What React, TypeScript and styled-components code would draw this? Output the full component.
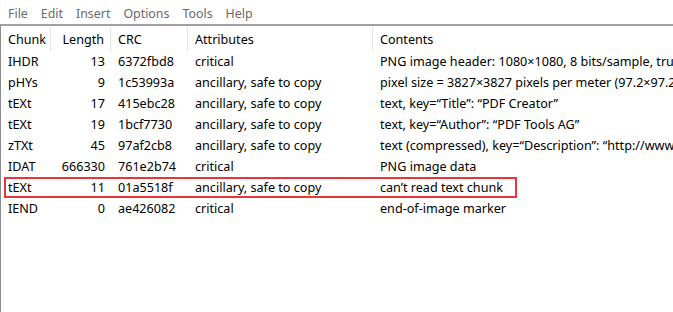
import React from "react";
import styled, { createGlobalStyle } from "styled-components";

const GlobalStyle = createGlobalStyle`
  html, body {
    margin: 0;
    padding: 0;
    background: #ffffff;
  }
  body {
    font-family: "Noto Sans", "Open Sans", sans-serif;
    font-size: 12.6px;
    color: #000000;
    overflow: hidden;
  }
`;

interface Chunk {
  name: string;
  length: number;
  crc: string;
  attributes: string;
  contents: string;
  /* marks the row with a red frame */
  marked?: boolean;
}

const chunks: Chunk[] = [
  { name: "IHDR", length: 13, crc: "6372fbd8", attributes: "critical", contents: "PNG image header: 1080×1080, 8 bits/sample, truecolor, noninterlaced" },
  { name: "pHYs", length: 9, crc: "1c53993a", attributes: "ancillary, safe to copy", contents: "pixel size = 3827×3827 pixels per meter (97.2×97.2 dpi)" },
  { name: "tEXt", length: 17, crc: "415ebc28", attributes: "ancillary, safe to copy", contents: "text, key=“Title”: “PDF Creator”" },
  { name: "tEXt", length: 19, crc: "1bcf7730", attributes: "ancillary, safe to copy", contents: "text, key=“Author”: “PDF Tools AG”" },
  { name: "zTXt", length: 45, crc: "97af2cb8", attributes: "ancillary, safe to copy", contents: "text (compressed), key=“Description”: “http://www.pdf-tools.com”" },
  { name: "IDAT", length: 666330, crc: "761e2b74", attributes: "critical", contents: "PNG image data" },
  { name: "tEXt", length: 11, crc: "01a5518f", attributes: "ancillary, safe to copy", contents: "can’t read text chunk", marked: true },
  { name: "IEND", length: 0, crc: "ae426082", attributes: "critical", contents: "end-of-image marker" }
];

const menuItems = ["File", "Edit", "Insert", "Options", "Tools", "Help"];

const Window = styled.div`
  width: 673px;
  height: 312px;
  display: flex;
  flex-direction: column;
  overflow: hidden;
`;

const MenuBar = styled.div`
  height: 20px;
  padding: 4px 0 0 8px;
  display: flex;
  align-items: center;
  gap: 13px;
  color: #6a6a6a;
  font-size: 12.4px;
`;

const MenuItem = styled.span`
  line-height: 20px;
`;

const ListPane = styled.div`
  flex: 1;
  border-top: 2px solid #a0a0a0;
  border-left: 2px solid #8c8c8c;
  margin-left: -1px;
  white-space: nowrap;
`;

const columns = "50px 60px 77px 185px 1fr";

const HeaderRow = styled.div`
  display: grid;
  grid-template-columns: ${columns};
  height: 25px;
  align-items: stretch;
`;

const HeaderCell = styled.div<{ align?: "right" }>`
  display: flex;
  align-items: center;
  justify-content: ${props => (props.align === "right" ? "flex-end" : "flex-start")};
  padding: 0 6px 0 7px;
  border-right: 1px solid #e3e3e3;
  margin: 1px 0 0;

  &:last-child {
    border-right: none;
  }
`;

const Row = styled.div<{ marked?: boolean }>`
  position: relative;
  display: grid;
  grid-template-columns: ${columns};
  height: 21px;
  align-items: center;

  &::after {
    content: "";
    display: ${props => (props.marked ? "block" : "none")};
    position: absolute;
    left: 3px;
    top: 0px;
    width: 513px;
    height: 21px;
    box-sizing: border-box;
    border: 2px solid #e8353b;
  }
`;

const Cell = styled.div<{ align?: "right" }>`
  text-align: ${props => props.align || "left"};
  padding: 0 6px 0 7px;
  overflow: visible;
`;

const App = (): JSX.Element => (
  <Window>
    <GlobalStyle />
    <MenuBar>
      {menuItems.map(item => (
        <MenuItem key={item}>{item}</MenuItem>
      ))}
    </MenuBar>
    <ListPane>
      <HeaderRow>
        <HeaderCell>Chunk</HeaderCell>
        <HeaderCell align="right">Length</HeaderCell>
        <HeaderCell>CRC</HeaderCell>
        <HeaderCell>Attributes</HeaderCell>
        <HeaderCell>Contents</HeaderCell>
      </HeaderRow>
      {chunks.map((chunk, i) => (
        <Row key={i} marked={chunk.marked}>
          <Cell>{chunk.name}</Cell>
          <Cell align="right">{chunk.length}</Cell>
          <Cell>{chunk.crc}</Cell>
          <Cell>{chunk.attributes}</Cell>
          <Cell>{chunk.contents}</Cell>
        </Row>
      ))}
    </ListPane>
  </Window>
);

export default App;
